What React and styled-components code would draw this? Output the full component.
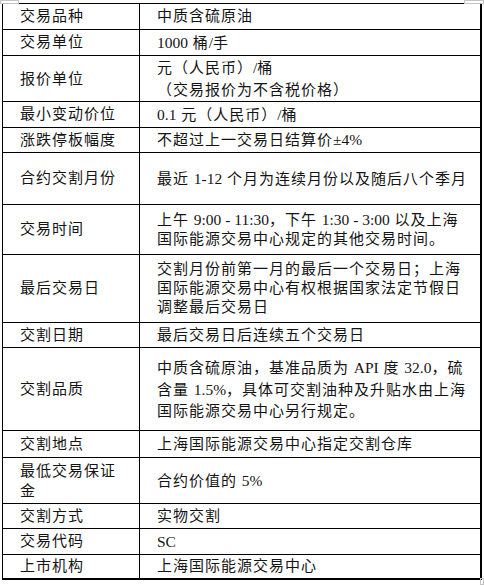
import React from "react";
import styled, { createGlobalStyle } from "styled-components";

const GlobalStyle = createGlobalStyle`
    html, body {
        margin: 0;
        padding: 0;
        background: #fff;
    }
    body {
        font-family: "Liberation Serif", "Noto Sans CJK SC", serif;
        color: #141414;
    }
`

const rows = [
    { label: "交易品种", value: ["中质含硫原油"], h: 26 },
    { label: "交易单位", value: ["1000 桶/手"], h: 26 },
    { label: "报价单位", value: ["元（人民币）/桶", "（交易报价为不含税价格）"], h: 46, lh: 22 },
    { label: "最小变动价位", value: ["0.1 元（人民币）/桶"], h: 26 },
    { label: "涨跌停板幅度", value: ["不超过上一交易日结算价±4%"], h: 25 },
    { label: "合约交割月份", value: ["最近 1-12 个月为连续月份以及随后八个季月"], h: 52 },
    { label: "交易时间", value: ["上午 9:00 - 11:30，下午 1:30 - 3:00 以及上海", "国际能源交易中心规定的其他交易时间。"], h: 50 },
    { label: "最后交易日", value: ["交割月份前第一月的最后一个交易日；上海", "国际能源交易中心有权根据国家法定节假日", "调整最后交易日"], h: 68 },
    { label: "交割日期", value: ["最后交易日后连续五个交易日"], h: 25 },
    { label: "交割品质", value: ["中质含硫原油，基准品质为 API 度 32.0，硫", "含量 1.5%，具体可交割油种及升贴水由上海", "国际能源交易中心另行规定。"], h: 83, lh: 21 },
    { label: "交割地点", value: ["上海国际能源交易中心指定交割仓库"], h: 27 },
    { label: ["最低交易保证", "金"], value: ["合约价值的 5%"], h: 46, lh: 20 },
    { label: "交割方式", value: ["实物交割"], h: 25 },
    { label: "交易代码", value: ["SC"], h: 26 },
    { label: "上市机构", value: ["上海国际能源交易中心"], h: 25 },
]

const Page = styled.div`
    position: relative;
    width: 484px;
    height: 585px;
    padding: 3px 0 0 2px;
    box-sizing: border-box;
`

const Mark = styled.span`
    position: absolute;
    border: 1px solid #c4c4c4;
    box-sizing: border-box;
`

const Sheet = styled.div`
    width: 480px;
    border-top: 1.5px solid #000;
    border-left: 1.5px solid #000;
    border-right: 2px solid #000;
    box-sizing: border-box;
`

const Row = styled.div`
    display: grid;
    grid-template-columns: 136px 1fr;
    height: ${p => p.$h}px;
    border-bottom: ${p => (p.$last ? 2 : 1.5)}px solid #000;
    box-sizing: border-box;
`

const Cell = styled.div`
    display: flex;
    flex-direction: column;
    justify-content: center;
    padding-left: 17px;
    font-size: 15px;
    line-height: ${p => p.$lh || 19}px;
    letter-spacing: 1px;
    white-space: nowrap;
    border-left: ${p => (p.$divider ? "1.5px solid #000" : "none")};
`

const Line = styled.span`
    display: block;
`

// latin runs (digits, SC, API...) are set tight, as in the original
const Latin = styled.span`
    letter-spacing: 0;
    font-size: 15.5px;
`

const renderText = (t) =>
    t.split(/([\x21-\x7E±][\x20-\x7E±]*[\x21-\x7E±]|[\x21-\x7E±])/).map((part, k) =>
        k % 2 ? <Latin key={k}>{part}</Latin> : part
    )

const App = () => {
    return (
        <Page>
            <GlobalStyle />
            <Mark style={{ left: 0, top: 0, width: 19, height: 4 }} />
            <Mark style={{ left: 464, top: 0, width: 20, height: 4 }} />
            <Mark style={{ left: 480, top: 578, width: 4, height: 7 }} />
            <Sheet>
                {rows.map((r, i) => {
                    const label = Array.isArray(r.label) ? r.label : [r.label]
                    return (
                        <Row key={i} $h={r.h} $last={i === rows.length - 1}>
                            <Cell $lh={r.lh}>
                                {label.map((t, j) => <Line key={j}>{t}</Line>)}
                            </Cell>
                            <Cell $divider $lh={r.lh}>
                                {r.value.map((t, j) => <Line key={j}>{renderText(t)}</Line>)}
                            </Cell>
                        </Row>
                    )
                })}
            </Sheet>
        </Page>
    )
}

export default App
